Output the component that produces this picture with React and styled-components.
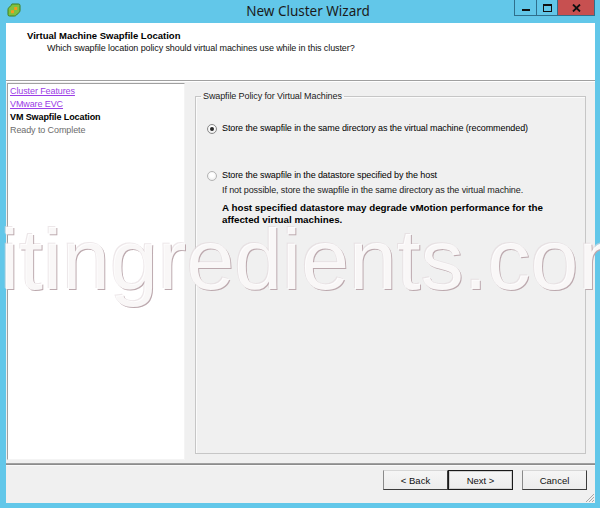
import React from 'react';
import styled, { createGlobalStyle, css } from 'styled-components';

const UI_FONT = `"Liberation Sans", Arial, sans-serif`;

const Global = createGlobalStyle`
  html, body { margin: 0; padding: 0; background: #62c7e9; }
  body { font-family: ${UI_FONT}; }
`;

const Frame = styled.div`
  position: relative;
  width: 600px;
  height: 508px;
  box-sizing: border-box;
  background: #62c7e9;
  padding: 0 5px 5px 6px;
  display: flex;
  flex-direction: column;
  overflow: hidden;
`;

const TitleBar = styled.div`
  height: 23px;
  flex: none;
  display: grid;
  grid-template-columns: 1fr auto 1fr;
  align-items: start;
`;

const AppIcon = styled.div`
  margin: 3px 0 0 1px;
  width: 14px;
  height: 14px;
  display: flex;
`;

const Title = styled.div`
  font-family: "Noto Sans", "Open Sans", sans-serif;
  font-size: 13.5px;
  line-height: 22px;
  color: #1b1b1b;
  padding-left: 15px;
  white-space: nowrap;
`;

const Controls = styled.div`
  justify-self: end;
  display: flex;
  height: 16px;
`;

const CtlButton = styled.div`
  box-sizing: border-box;
  height: 16px;
  width: ${p => p.$w}px;
  display: flex;
  align-items: center;
  justify-content: center;
  border: 1px solid #2f6f8c;
  border-top: none;
  background: ${p => (p.$close ? '#c75050' : '#62c7e9')};
  & + & { border-left: none; }
`;

const Client = styled.div`
  flex: 1;
  display: flex;
  flex-direction: column;
  background: #f0f0f0;
  font-size: 9px;
  letter-spacing: -0.1px;
  color: #000;
  min-height: 0;
`;

const Header = styled.div`
  height: 58px;
  flex: none;
  box-sizing: border-box;
  background: #fff;
  border-bottom: 1px solid #a0a0a0;
  padding: 6px 0 0 21px;
  line-height: 13px;
`;

const HeaderTitle = styled.div`
  font-weight: bold;
  font-size: 9.5px;
  letter-spacing: 0;
`;

const HeaderSub = styled.div`
  padding-left: 20px;
  color: #111;
`;

const Main = styled.div`
  flex: 1;
  display: flex;
  padding: 2px 9px 3px 1px;
  min-height: 0;
  box-shadow: inset 0 1px 0 #fff;
`;

const StepList = styled.div`
  width: 178px;
  flex: none;
  box-sizing: border-box;
  background: #fff;
  border: 1px solid;
  border-color: #a0a0a0 #f4f4f4 #f4f4f4 #a0a0a0;
  padding: 1px 2px;
  display: flex;
  flex-direction: column;
  line-height: 13px;
`;

const Step = styled.div`
  white-space: nowrap;
  ${p => p.$state === 'done' && css`
    color: #9b3de6;
    text-decoration: underline;
  `}
  ${p => p.$state === 'current' && css`
    font-weight: bold;
    color: #000;
  `}
  ${p => p.$state === 'todo' && css`
    color: #6d6d6d;
  `}
`;

const RightCol = styled.div`
  flex: 1;
  display: flex;
  flex-direction: column;
  margin-left: 10px;
  padding: 7px 0 6px;
  min-width: 0;
`;

const Group = styled.fieldset`
  flex: 1;
  margin: 0;
  padding: 0;
  min-width: 0;
  border: 1px solid #c6c6c6;
  box-shadow: inset 1px 1px 0 #fbfbfb;
`;

const Legend = styled.legend`
  margin-left: 5px;
  padding: 0 2px;
  font-size: 9px;
  line-height: 13px;
  color: #1a1a1a;
`;

const GroupBody = styled.div`
  padding: 19px 0 0 11px;
  display: flex;
  flex-direction: column;
  line-height: 13px;
`;

const Option = styled.div`
  display: flex;
  align-items: center;
  margin-top: ${p => p.$gap || 0}px;
  white-space: nowrap;
`;

const Radio = styled.span`
  width: 10px;
  height: 10px;
  box-sizing: border-box;
  border-radius: 50%;
  border: 1px solid ${p => (p.$checked ? '#8a8a8a' : '#b4b4b4')};
  background: radial-gradient(circle at 50% 40%, #ffffff 30%, #e4e4e4 100%);
  display: inline-flex;
  align-items: center;
  justify-content: center;
  margin-right: 5px;
  flex: none;
  &::after {
    content: '';
    width: 4px;
    height: 4px;
    border-radius: 50%;
    background: ${p => (p.$checked ? '#262626' : 'transparent')};
  }
`;

const Note = styled.div`
  padding-left: 15px;
  margin-top: ${p => p.$gap || 0}px;
  line-height: ${p => (p.$bold ? 12 : 13)}px;
  font-weight: ${p => (p.$bold ? 'bold' : 'normal')};
  font-size: ${p => (p.$bold ? 9.8 : 9)}px;
  letter-spacing: ${p => (p.$bold ? 0 : -0.1)}px;
  color: ${p => (p.$bold ? '#000' : '#222')};
  white-space: nowrap;
`;

const Footer = styled.div`
  position: relative;
  height: 40px;
  flex: none;
  box-sizing: border-box;
  border-top: 1px solid #a0a0a0;
  box-shadow: inset 0 1px 0 #8c8c8c, inset 0 2px 0 #fafafa;
  padding: 6px 8px 0 0;
  display: flex;
  justify-content: flex-end;
  align-items: flex-start;
`;

const NavGroup = styled.div`
  display: flex;
  margin-right: 9px;
`;

const Button = styled.button`
  width: 65px;
  height: 20px;
  box-sizing: border-box;
  padding: 0;
  font-family: ${UI_FONT};
  font-size: 9.5px;
  color: #111;
  background: linear-gradient(#f5f5f5, #ececec);
  border: 1px solid;
  border-color: #d6d6d6 #3c3c3c #3c3c3c #8a8a8a;
  ${p => p.$default && css`
    border-color: #1a1a1a;
    box-shadow: inset 0 0 0 1px #cfcfcf;
  `}
`;

const Grip = styled.div`
  position: absolute;
  right: 0;
  bottom: 0;
  width: 11px;
  height: 11px;
  display: flex;
`;

const Watermark = styled.div`
  position: absolute;
  left: 0;
  top: 216px;
  font-family: "Liberation Sans", Arial, sans-serif;
  font-size: 86px;
  line-height: 86px;
  white-space: nowrap;
  color: rgba(255, 255, 255, 0.9);
  text-shadow: 1px 1px 0 #bca9ae, -1px -1px 0 rgba(225, 215, 218, 0.6);
  pointer-events: none;
`;

export default function App() {
  return (
    <>
      <Global />
      <Frame>
        <TitleBar>
          <AppIcon>
            <svg width="14" height="14" viewBox="0 0 14 14">
              <path d="M5 1 H11.5 Q13 1 13 2.5 V7.5 Q13 8.5 12 9.5 L9.5 12 Q8.5 13 7.5 13 H2.5 Q1 13 1 11.5 V6.5 Q1 5.5 2 4.5 L4 2.5 Q4.5 1 5 1 Z" fill="#7cc242" stroke="#3f7d1f" strokeWidth="1" />
              <rect x="7.2" y="4" width="3" height="3" fill="#f29b1d" />
              <rect x="4" y="7.2" width="3" height="3" fill="#f29b1d" />
            </svg>
          </AppIcon>
          <Title>New Cluster Wizard</Title>
          <Controls>
            <CtlButton $w={23}>
              <svg width="8" height="8" viewBox="0 0 8 8"><rect x="0" y="5" width="8" height="2" fill="#111" /></svg>
            </CtlButton>
            <CtlButton $w={21}>
              <svg width="9" height="8" viewBox="0 0 9 8"><rect x="0.5" y="0.5" width="8" height="7" fill="none" stroke="#111" /><rect x="0" y="0" width="9" height="2" fill="#111" /></svg>
            </CtlButton>
            <CtlButton $w={37} $close>
              <svg width="9" height="8" viewBox="0 0 9 8"><path d="M1 0.5 L8 7.5 M8 0.5 L1 7.5" stroke="#111" strokeWidth="1.8" /></svg>
            </CtlButton>
          </Controls>
        </TitleBar>
        <Client>
          <Header>
            <HeaderTitle>Virtual Machine Swapfile Location</HeaderTitle>
            <HeaderSub>Which swapfile location policy should virtual machines use while in this cluster?</HeaderSub>
          </Header>
          <Main>
            <StepList>
              <Step $state="done">Cluster Features</Step>
              <Step $state="done">VMware EVC</Step>
              <Step $state="current">VM Swapfile Location</Step>
              <Step $state="todo">Ready to Complete</Step>
            </StepList>
            <RightCol>
              <Group>
                <Legend>Swapfile Policy for Virtual Machines</Legend>
                <GroupBody>
                  <Option>
                    <Radio $checked />
                    Store the swapfile in the same directory as the virtual machine (recommended)
                  </Option>
                  <Option $gap={34}>
                    <Radio />
                    Store the swapfile in the datastore specified by the host
                  </Option>
                  <Note $gap={2}>If not possible, store the swapfile in the same directory as the virtual machine.</Note>
                  <Note $gap={5} $bold>
                    A host specified datastore may degrade vMotion performance for the
                    <br />
                    affected virtual machines.
                  </Note>
                </GroupBody>
              </Group>
            </RightCol>
          </Main>
          <Footer>
            <NavGroup>
              <Button>&lt; Back</Button>
              <Button $default>Next &gt;</Button>
            </NavGroup>
            <Button>Cancel</Button>
            <Grip>
              <svg width="11" height="11" viewBox="0 0 11 11">
                <path d="M10 2 L2 10 M10 5 L5 10 M10 8 L8 10" stroke="#a8a8a8" strokeWidth="1" />
              </svg>
            </Grip>
          </Footer>
        </Client>
        <Watermark>itingredients.com</Watermark>
      </Frame>
    </>
  );
}
